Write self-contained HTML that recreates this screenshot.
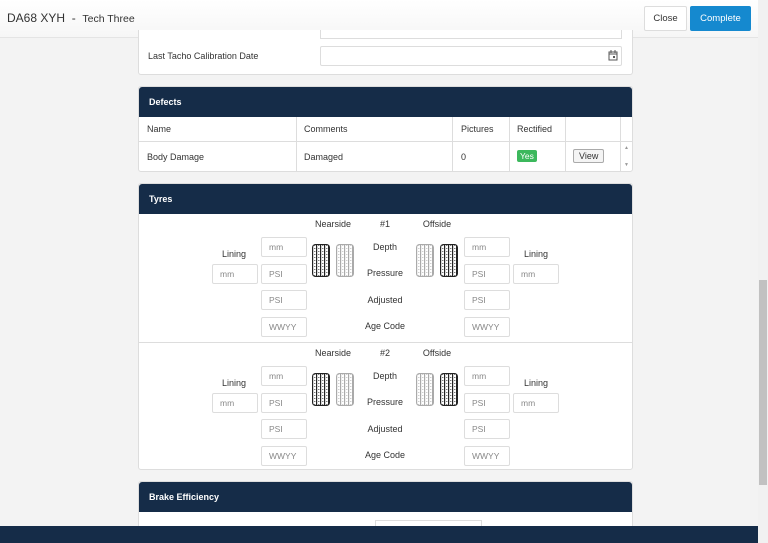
<!DOCTYPE html><html><head><style>
*{box-sizing:border-box;margin:0;padding:0}
body{width:768px;height:543px;overflow:hidden;background:#f3f3f3;font-family:"Liberation Sans",sans-serif;font-size:9px;color:#333;position:relative}
.a{position:absolute}
.hdr{left:0;top:0;width:758px;height:38px;background:linear-gradient(#fff,#f6f6f6);border-bottom:1px solid #e4e4e4}
.card{background:#fff;border:1px solid #ddd;border-radius:3px}
.ch{background:#152c48;color:#fff;font-weight:bold;font-size:9px;padding-left:10px;line-height:30px;border-radius:3px 3px 0 0}
.inp{position:absolute;background:#fff;border:1px solid #ddd;border-radius:2px;width:46px;height:20px;color:#888;font-size:8.5px;line-height:18px;padding-left:7px}
.lb{position:absolute;font-size:9px;color:#333;text-align:center;width:80px}
.c{position:absolute;top:0;height:100%;border-left:1px solid #ddd}
</style></head><body>
<div class="a hdr"></div>
<div class="a" style="left:7px;top:11px;font-size:12px;color:#333">DA68 XYH &nbsp;-&nbsp; <span style="font-size:10.5px">Tech Three</span></div>
<div class="a" style="left:644px;top:6px;width:43px;height:25px;border:1px solid #ddd;background:#fff;border-radius:2px;text-align:center;line-height:23px;font-size:9.5px">Close</div>
<div class="a" style="left:690px;top:6px;width:61px;height:25px;background:#1589cf;color:#fff;border-radius:2px;text-align:center;line-height:25px;font-size:9.5px">Complete</div>
<div class="a" style="left:758px;top:0;width:10px;height:543px;background:#f1f1f1"></div>
<div class="a" style="left:759px;top:280px;width:8px;height:205px;background:#c1c1c1"></div>

<div class="a card" style="left:138px;top:30px;width:495px;height:45px;border-top:none;border-radius:0 0 3px 3px"></div>
<div class="a" style="left:320px;top:30px;width:302px;height:9px;border:1px solid #ddd;border-top:none"></div>
<div class="a" style="left:148px;top:51px">Last Tacho Calibration Date</div>
<div class="a" style="left:320px;top:46px;width:302px;height:20px;border:1px solid #ddd;border-radius:2px;background:#fff"></div>
<svg class="a" style="left:608px;top:50px" width="10" height="11"><rect x="1" y="2" width="8" height="8" fill="none" stroke="#555"/><path d="M1 4h8M3 0v3M7 0v3" stroke="#555"/><rect x="5" y="6" width="2" height="2" fill="#555"/></svg>

<div class="a card" style="left:138px;top:86px;width:495px;height:86px">
<div class="ch">Defects</div>
<div style="position:relative;height:25px;border-bottom:1px solid #ddd">
<div class="c" style="left:157px"></div><div class="c" style="left:313px"></div><div class="c" style="left:370px"></div><div class="c" style="left:426px"></div><div class="c" style="left:481px"></div>
<span class="a" style="left:8px;top:7px">Name</span><span class="a" style="left:165px;top:7px">Comments</span><span class="a" style="left:322px;top:7px">Pictures</span><span class="a" style="left:378px;top:7px">Rectified</span></div>
<div style="position:relative;height:29px">
<div class="c" style="left:157px"></div><div class="c" style="left:313px"></div><div class="c" style="left:370px"></div><div class="c" style="left:426px"></div><div class="c" style="left:481px"></div>
<span class="a" style="left:8px;top:10px">Body Damage</span><span class="a" style="left:165px;top:10px">Damaged</span><span class="a" style="left:322px;top:10px">0</span>
<span class="a" style="left:378px;top:8px;background:#3cb85c;color:#fff;padding:1px 3px;border-radius:2px;font-size:8.5px">Yes</span>
<span class="a" style="left:434px;top:7px;border:1px solid #aaa;background:#f4f4f4;padding:1px 5px;border-radius:2px">View</span>
<span class="a" style="left:485px;top:3px;font-size:5px;color:#999">▲</span><span class="a" style="left:485px;top:20px;font-size:5px;color:#999">▼</span></div>
</div>

<div class="a card" style="left:138px;top:183px;width:495px;height:287px">
<div class="ch">Tyres</div>
<div style="position:absolute;left:0;top:158px;width:100%;border-top:1px solid #ddd"></div>
</div>
<div id="t"></div>

<div class="a card" style="left:138px;top:481px;width:495px;height:60px"><div class="ch">Brake Efficiency</div></div>
<div class="a" style="left:375px;top:520px;width:107px;height:10px;border:1px solid #ddd;background:#fff"></div>
<div class="a" style="left:0;top:526px;width:758px;height:17px;background:#152c48"></div>

<svg width="0" height="0" style="position:absolute"><defs>
<pattern id="pd" width="4" height="3" patternUnits="userSpaceOnUse"><rect width="4" height="3" fill="#fff"/><rect x="0" width="1.2" height="3" fill="#222"/><rect x="2.3" y="1" width="1" height="1" fill="#444"/></pattern>
<pattern id="pl" width="4" height="3" patternUnits="userSpaceOnUse"><rect width="4" height="3" fill="#fff"/><rect x="0" width="1.2" height="3" fill="#aaa"/><rect x="2.3" y="1" width="1" height="1" fill="#bbb"/></pattern>
</defs></svg>

<script>
var h='';
function sec(o,n){
 h+='<div class="lb" style="left:293px;top:'+(219+o)+'px">Nearside</div><div class="lb" style="left:345px;top:'+(219+o)+'px">#'+n+'</div><div class="lb" style="left:397px;top:'+(219+o)+'px">Offside</div>';
 [['Depth',242],['Pressure',268],['Adjusted',295],['Age Code',321]].forEach(function(r){h+='<div class="lb" style="left:345px;top:'+(r[1]+o)+'px">'+r[0]+'</div>';});
 h+='<div class="lb" style="left:194px;top:'+(249+o)+'px">Lining</div><div class="lb" style="left:496px;top:'+(249+o)+'px">Lining</div>';
 var ys=[237,264,290,317],tx=['mm','PSI','PSI','WWYY'];
 for(var i=0;i<4;i++){h+='<div class="inp" style="left:261px;top:'+(ys[i]+o)+'px">'+tx[i]+'</div><div class="inp" style="left:464px;top:'+(ys[i]+o)+'px">'+tx[i]+'</div>';}
 h+='<div class="inp" style="left:212px;top:'+(264+o)+'px">mm</div><div class="inp" style="left:513px;top:'+(264+o)+'px">mm</div>';
 [[312,'d'],[336,'l'],[416,'l'],[440,'d']].forEach(function(t){h+='<svg class="a" style="left:'+t[0]+'px;top:'+(244+o)+'px" width="18" height="33"><rect x="0.5" y="0.5" width="17" height="32" rx="3" fill="url(#p'+t[1]+')" stroke="'+(t[1]=='d'?'#222':'#aaa')+'"/></svg>';});
}
sec(0,1);sec(129,2);
document.getElementById('t').innerHTML=h;
</script>
</body></html>
